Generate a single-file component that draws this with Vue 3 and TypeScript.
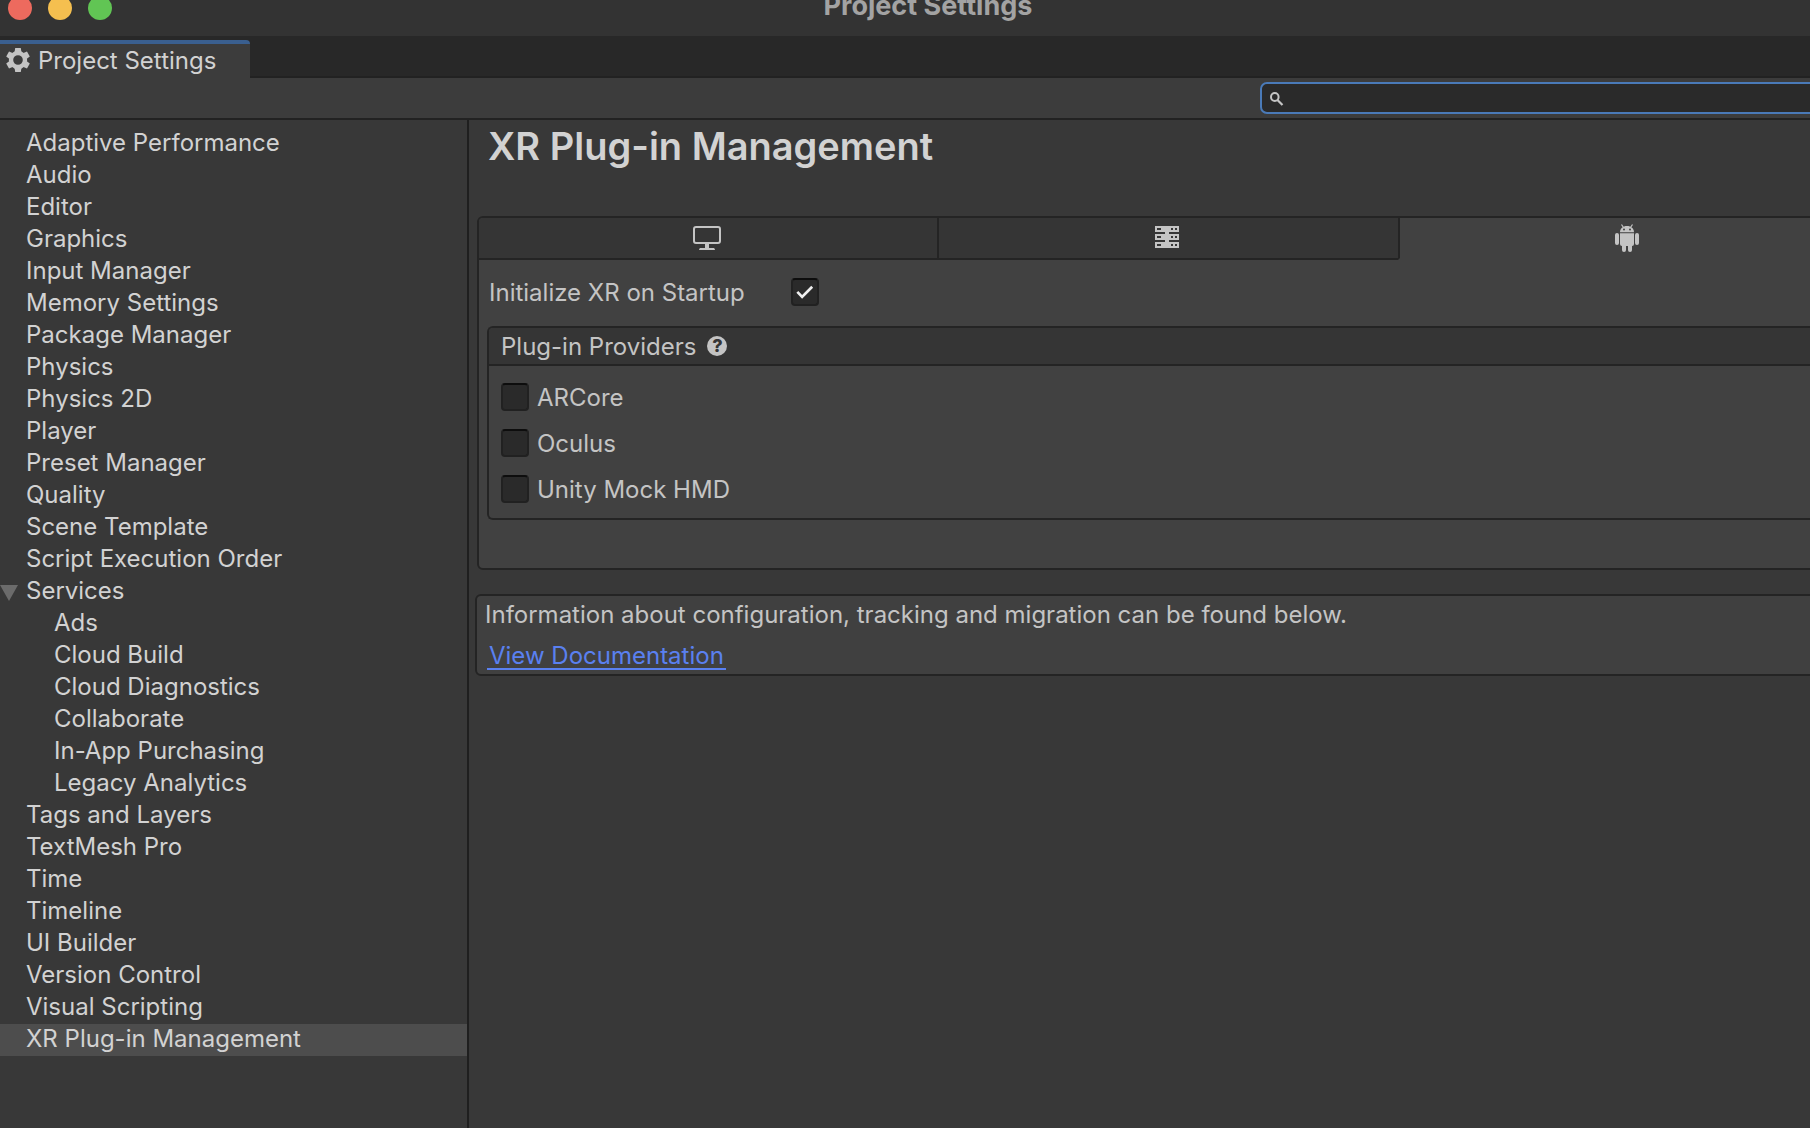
<script setup lang="ts">
import { ref } from 'vue'

interface Entry {
  label: string
  child?: boolean
  open?: boolean
}

const top = (label: string): Entry => ({ label })
const child = (label: string): Entry => ({ label, child: true })

const entries: Entry[] = [
  ...[
    'Adaptive Performance', 'Audio', 'Editor', 'Graphics', 'Input Manager',
    'Memory Settings', 'Package Manager', 'Physics', 'Physics 2D', 'Player',
    'Preset Manager', 'Quality', 'Scene Template', 'Script Execution Order',
  ].map(top),
  { label: 'Services', open: true },
  ...[
    'Ads', 'Cloud Build', 'Cloud Diagnostics', 'Collaborate',
    'In-App Purchasing', 'Legacy Analytics',
  ].map(child),
  ...[
    'Tags and Layers', 'TextMesh Pro', 'Time', 'Timeline', 'UI Builder',
    'Version Control', 'Visual Scripting', 'XR Plug-in Management',
  ].map(top),
]

const selected = ref('XR Plug-in Management')
const platform = ref('android')
const query = ref('')
const initOnStartup = ref(true)
const providers = ref([
  { name: 'ARCore', on: false },
  { name: 'Oculus', on: false },
  { name: 'Unity Mock HMD', on: false },
])
</script>

<template>
  <div class="viewport">
    <div class="window">
      <header class="titlebar">
        <div class="lights">
          <button class="light close" aria-label="Close"></button>
          <button class="light minimise" aria-label="Minimise"></button>
          <button class="light zoom" aria-label="Zoom"></button>
        </div>
        <div class="window-title">Project Settings</div>
      </header>

      <div class="dock">
        <button class="dock-tab">
          <svg width="24" height="24" viewBox="0 0 24 24" aria-hidden="true">
            <g fill="#c4c4c4">
              <path
                fill-rule="evenodd"
                d="M12 2.800a9.200 9.200 0 1 0 0 18.400a9.200 9.200 0 0 0 0-18.400zM12 7.200a4.800 4.800 0 1 1 0 9.600a4.800 4.800 0 0 1 0-9.600z"
              />
              <path d="M9.200 0h5.600l.8 5h-7.200zM9.200 24h5.600l.8-5h-7.200z" />
              <path d="M9.200 0h5.600l.8 5h-7.200zM9.200 24h5.600l.8-5h-7.200z" transform="rotate(60 12 12)" />
              <path d="M9.200 0h5.600l.8 5h-7.200zM9.200 24h5.600l.8-5h-7.200z" transform="rotate(120 12 12)" />
            </g>
          </svg>
          <span class="caption">Project Settings</span>
        </button>
        <div class="dock-rest"></div>
      </div>

      <div class="toolbar">
        <label class="search">
          <svg width="14" height="14" viewBox="0 0 14 14" aria-hidden="true">
            <ellipse cx="4.800" cy="5" rx="3.800" ry="4" fill="none" stroke="#c4c4c4" stroke-width="2" />
            <path d="M7.500 8L12.500 13" stroke="#c4c4c4" stroke-width="2.200" />
          </svg>
          <input v-model="query" type="text" aria-label="Search settings" />
        </label>
      </div>

      <div class="body">
        <nav class="sidebar">
          <button
            v-for="e in entries"
            :key="e.label"
            class="entry"
            :class="{ child: e.child, selected: e.label === selected }"
            @click="selected = e.label"
          >
            <svg v-if="e.open" class="arrow" width="18" height="16" viewBox="0 0 18 16" aria-hidden="true">
              <path d="M0 0H18L9 16z" fill="#6b6b6b" />
            </svg>
            {{ e.label }}
          </button>
        </nav>

        <main class="main">
          <h1>XR Plug-in Management</h1>

          <section class="panel">
            <div class="platforms" role="tablist">
              <button
                class="platform" role="tab" aria-label="Desktop"
                :class="{ active: platform === 'desktop' }" @click="platform = 'desktop'"
              >
                <svg width="28" height="24" viewBox="0 0 28 24" aria-hidden="true">
                  <rect x="1" y="1" width="26" height="16" rx="2" fill="none" stroke="#c4c4c4" stroke-width="2" />
                  <path d="M12 18h4v4h5q1 1 1 2H6q0-1 1-2h5z" fill="#c4c4c4" />
                </svg>
              </button>
              <button
                class="platform" role="tab" aria-label="Dedicated server"
                :class="{ active: platform === 'server' }" @click="platform = 'server'"
              >
                <svg width="24" height="24" viewBox="0 0 24 24" aria-hidden="true">
                  <path d="M0 0h24v6h-10v2h10v6h-10v2h10v6H0v-6h10v-2H0V8h10V6H0z" fill="#c4c4c4" />
                  <path
                    d="M2 2h4v2H2zM16 2h2v2h-2zM20 2h2v2h-2zM2 10h4v2H2zM16 10h2v2h-2zM20 10h2v2h-2zM2 18h4v2H2zM16 18h2v2h-2zM20 18h2v2h-2z"
                    fill="#353535"
                  />
                </svg>
              </button>
              <button
                class="platform" role="tab" aria-label="Android"
                :class="{ active: platform === 'android' }" @click="platform = 'android'"
              >
                <svg width="24" height="28" viewBox="0 0 24 28" aria-hidden="true">
                  <g fill="#c4c4c4">
                    <path d="M5 8.200C5 4.500 8 2 12 2s7 2.500 7 6.200z" />
                    <path d="M5 9.200h14V20q0 2-2 2H7q-2 0-2-2z" />
                    <rect x="0" y="9" width="4" height="12" rx="2" />
                    <rect x="20" y="9" width="4" height="12" rx="2" />
                    <rect x="7" y="19" width="4" height="9" rx="2" />
                    <rect x="13" y="19" width="4" height="9" rx="2" />
                  </g>
                  <path d="M6.500 .5L8.500 3.500M17.500 .5L15.500 3.500" stroke="#c4c4c4" stroke-width="1.200" />
                  <circle cx="9" cy="5.500" r="1" fill="#414141" />
                  <circle cx="15" cy="5.500" r="1" fill="#414141" />
                </svg>
              </button>
            </div>

            <div class="startup">
              <label class="caption" for="startup">Initialize XR on Startup</label>
              <input id="startup" v-model="initOnStartup" class="tick" type="checkbox" />
            </div>

            <section class="providers">
              <div class="providers-head">
                <span class="caption">Plug-in Providers</span>
                <button class="help" aria-label="Help">?</button>
              </div>
              <div class="providers-list">
                <label v-for="p in providers" :key="p.name" class="provider">
                  <input v-model="p.on" class="tick" type="checkbox" />
                  <span class="caption">{{ p.name }}</span>
                </label>
              </div>
            </section>
          </section>

          <section class="info">
            <p>Information about configuration, tracking and migration can be found below.</p>
            <a href="#documentation">View Documentation</a>
          </section>
        </main>
      </div>
    </div>
  </div>
</template>

<style>
body {
  margin: 0;
  background: #383838;
}
</style>

<style scoped>
.viewport {
  overflow: hidden;
  min-height: 100vh;
  display: flex;
  font-family: Inter, "Liberation Sans", sans-serif;
  font-size: 24px;
  line-height: 28px;
  font-optical-sizing: none;
  color: #c4c4c4;
}

/* The window is wider than the screen and runs off its right edge. */
.window {
  flex: none;
  width: calc(100% + 50px);
  display: flex;
  flex-direction: column;
  background: #383838;
}

button {
  font: inherit;
  color: inherit;
  border: 0;
  padding: 0;
  background: none;
}

.caption {
  padding-top: 2px;
  line-height: 26px;
}

.titlebar {
  position: relative;
  height: 36px;
  display: flex;
  justify-content: center;
  background: #333;
}

.lights {
  position: absolute;
  left: 8px;
  top: -4px;
  display: flex;
  gap: 16px;
}

.light {
  width: 24px;
  height: 24px;
  border-radius: 50%;
}

.close { background: #ed6a5e; }
.minimise { background: #f5bf4f; }
.zoom { background: #61c554; }

.window-title {
  margin-top: -8px;
  padding-right: 4px;
  font-size: 27px;
  font-weight: 700;
  color: #a3a3a3;
}

.dock {
  display: flex;
  height: 42px;
  background: #282828;
}

.dock-tab {
  display: flex;
  align-items: center;
  gap: 8px;
  width: 250px;
  margin-top: 4px;
  padding: 0 6px 2px;
  border-top: 4px solid #3a5f8f;
  border-top-right-radius: 4px;
  background: #3c3c3c;
  color: #d2d2d2;
}

.dock-rest {
  flex: 1;
  border-bottom: 2px solid #222;
}

.toolbar {
  display: flex;
  justify-content: flex-end;
  padding: 4px 0;
  background: #3c3c3c;
  border-bottom: 2px solid #222;
}

.search {
  display: flex;
  align-items: center;
  gap: 8px;
  width: 600px;
  height: 32px;
  box-sizing: border-box;
  padding: 2px 8px 0;
  border: 2px solid #4a7ab8;
  border-radius: 7px;
  background: #2a2a2a;
}

.search input {
  flex: 1;
  min-width: 0;
  padding: 0;
  border: 0;
  outline: 0;
  background: transparent;
  color: #d2d2d2;
  font: inherit;
  font-size: 20px;
}

.body {
  flex: 1;
  display: flex;
}

.sidebar {
  flex: none;
  width: 467px;
  display: flex;
  flex-direction: column;
  padding: 8px 0;
  border-right: 2px solid #1f1f1f;
}

.entry {
  position: relative;
  padding: 1px 0 3px 26px;
  text-align: left;
  color: #d2d2d2;
}

.entry.child { padding-left: 54px; }
.entry.selected { background: #4d4d4d; }

.arrow {
  position: absolute;
  left: 0;
  top: 9px;
}

.main {
  flex: 1;
  min-width: 0;
  padding: 4px 0 0 6px;
}

h1 {
  margin: 0 0 48px 13px;
  font-size: 38px;
  line-height: 44px;
  font-weight: 600;
  color: #d2d2d2;
}

.panel {
  margin-left: 2px;
  padding-bottom: 48px;
  border: 2px solid #242424;
  border-radius: 6px;
  background: #414141;
}

.platforms { display: flex; }

.platform {
  flex: 1;
  display: flex;
  align-items: center;
  justify-content: center;
  height: 42px;
  padding-right: 3px;
  border-bottom: 2px solid #242424;
  background: #353535;
}

.platform + .platform { border-left: 2px solid #242424; }

.platform.active {
  background: #414141;
  border-bottom-color: #414141;
}

.platform:first-child { border-top-left-radius: 4px; }

.startup {
  display: flex;
  align-items: center;
  padding: 18px 10px 20px;
}

.startup label { width: 302px; }

.tick {
  appearance: none;
  flex: none;
  width: 28px;
  height: 28px;
  margin: 0;
  border: 2px solid #212121;
  border-top-color: #0d0d0d;
  border-radius: 4px;
  background: #2a2a2a;
}

.tick:checked::before {
  content: "";
  display: block;
  width: 24px;
  height: 24px;
  background: #eee;
  clip-path: polygon(14% 53%, 22% 46%, 38% 62%, 76% 24%, 84% 32%, 38% 78%);
}

.providers {
  margin-left: 8px;
  border: 2px solid #242424;
  border-right: 0;
  border-radius: 6px 0 0 6px;
}

.providers-head {
  display: flex;
  align-items: center;
  gap: 11px;
  padding: 4px 12px;
  border-bottom: 2px solid #242424;
  border-top-left-radius: 4px;
  background: #353535;
}

.help {
  width: 20px;
  height: 20px;
  border-radius: 50%;
  background: #c4c4c4;
  color: #353535;
  font-size: 18px;
  line-height: 20px;
  font-weight: 800;
}

.providers-list {
  display: flex;
  flex-direction: column;
  gap: 18px;
  padding: 17px 12px 15px;
}

.provider {
  display: flex;
  align-items: center;
  gap: 8px;
}

.info {
  margin-top: 24px;
  padding: 5px 8px 4px;
  border: 2px solid #242424;
  border-radius: 6px;
  background: #404040;
}

.info p { margin: 0 0 15px; }

.info a {
  display: block;
  width: fit-content;
  margin-left: 2px;
  padding: 0 2px;
  border-bottom: 2px solid #5a80f0;
  color: #5a80f0;
  line-height: 24px;
  text-decoration: none;
}
</style>
